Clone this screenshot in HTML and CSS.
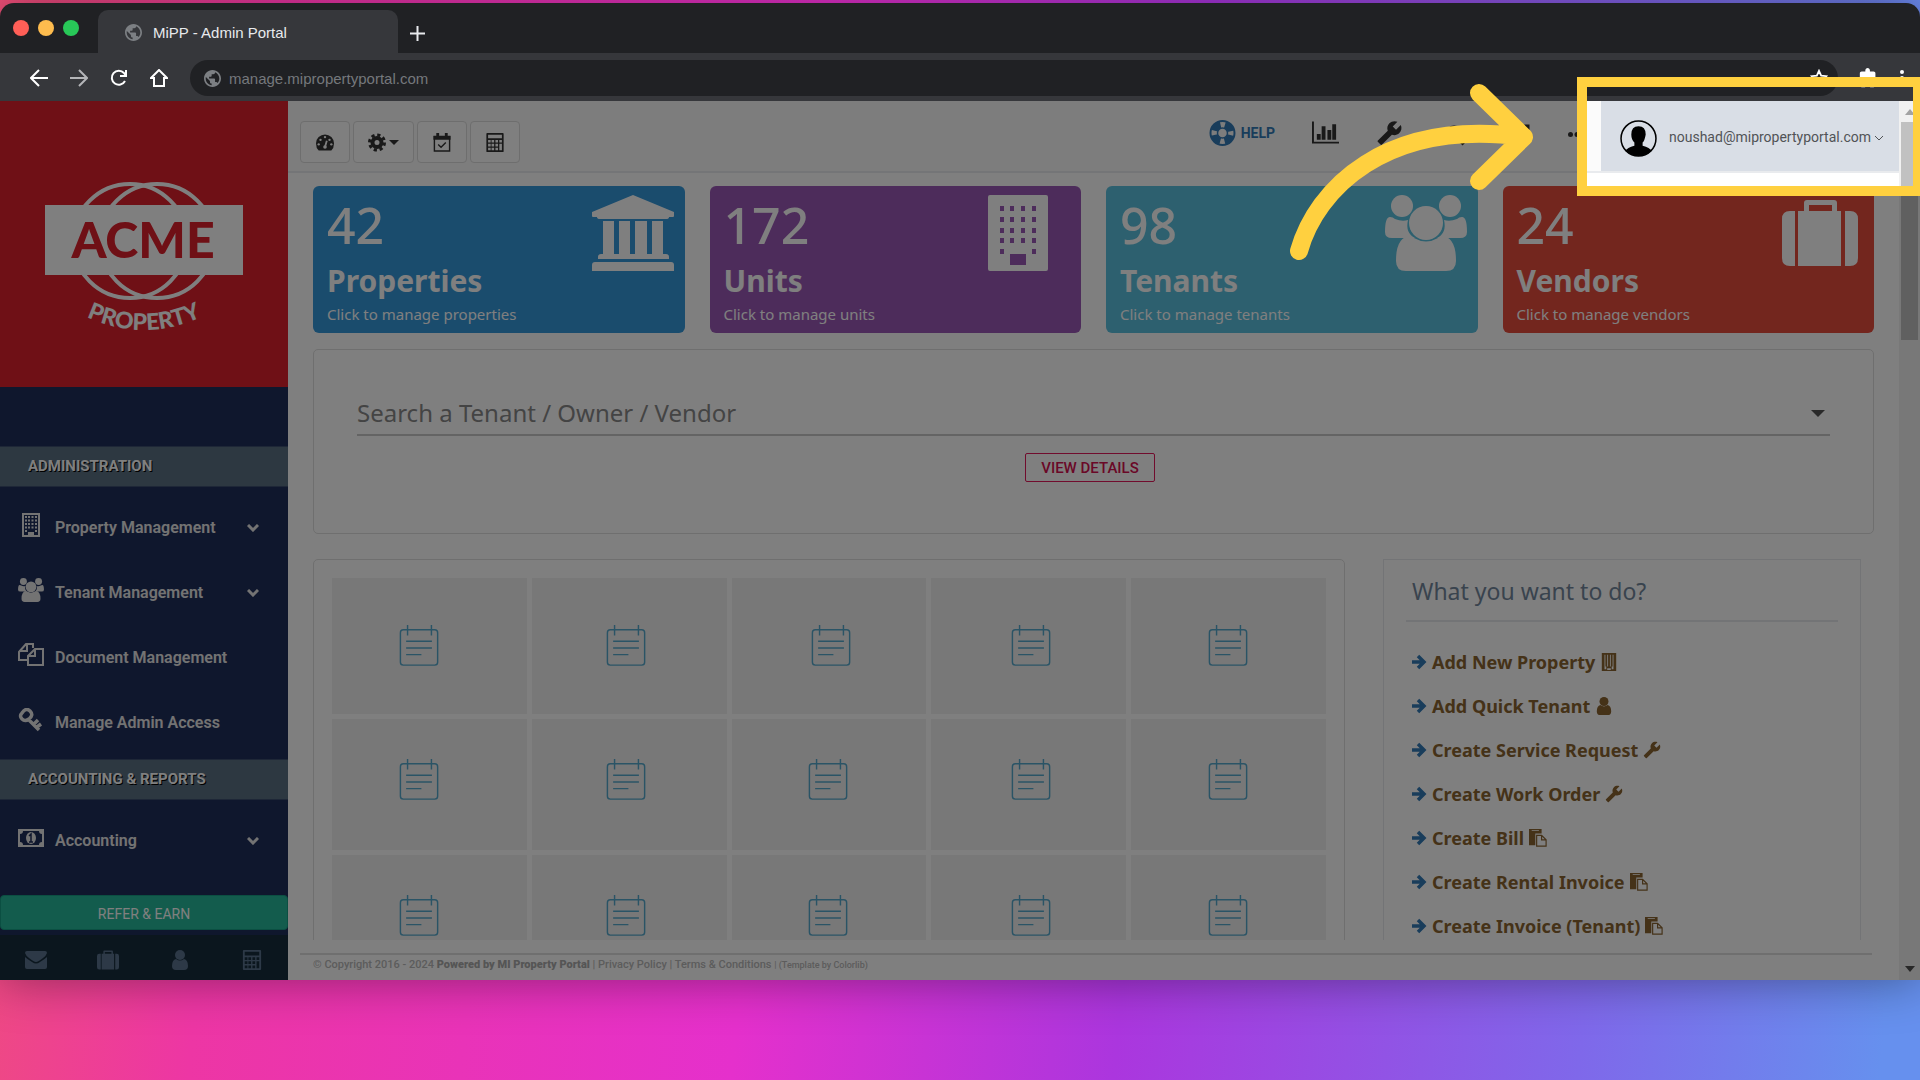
FILE: index.html
```html
<!DOCTYPE html>
<html lang="en">
<head>
<meta charset="utf-8">
<meta name="viewport" content="width=device-width, initial-scale=1">
<title>MiPP - Admin Portal</title>
<link rel="stylesheet" href="styles.css">
</head>
<body>
<svg class="sprite" aria-hidden="true">
  <symbol id="globe" viewBox="2 2 20 20"><path d="M12 2C6.480 2 2 6.480 2 12s4.480 10 10 10 10-4.480 10-10S17.520 2 12 2zm-1 17.930c-3.950-.49-7-3.850-7-7.930 0-.62.08-1.210.21-1.790L9 15v1c0 1.100.9 2 2 2v1.930zm6.900-2.540c-.26-.81-1-1.390-1.900-1.390h-1v-3c0-.55-.45-1-1-1H8v-2h2c.55 0 1-.45 1-1V7h2c1.100 0 2-.9 2-2v-.41c2.930 1.190 5 4.060 5 7.410 0 2.080-.8 3.970-2.100 5.390z"/></symbol>
  <symbol id="building" viewBox="0 0 20 24"><path fill-rule="evenodd" d="M1 0h18v24H1zM3 2v20h4v-3h6v3h4V2z"/><path d="M4 3h2v2H4zM7 3h2v2H7zM10.500 3h2v2h-2zM14 3h2v2h-2zM4 6.500h2v2H4zM7 6.500h2v2H7zM10.500 6.500h2v2h-2zM14 6.500h2v2h-2zM4 10h2v2H4zM7 10h2v2H7zM10.500 10h2v2h-2zM14 10h2v2h-2zM4 13.500h2v2H4zM7 13.500h2v2H7zM10.500 13.500h2v2h-2zM14 13.500h2v2h-2zM4 17h2v2H4zM14 17h2v2h-2z"/></symbol>
  <symbol id="block" viewBox="0 0 16 20"><path fill-rule="evenodd" d="M0 0h16v20H0zM3 2v13h1V2zm3 0v13h1V2zm3 0v13h1V2zm3 0v13h1V2zM3 15v3h2v-3zm8 0v3h2v-3zM6 17v2h4v-2z"/></symbol>
  <symbol id="tower" viewBox="0 0 60 76"><path fill-rule="evenodd" d="M2 0h56q2 0 2 2v72q0 2-2 2H2q-2 0-2-2V2q0-2 2-2zM12 11v5h4v-5zm10 0v5h4v-5zm11 0v5h4v-5zm11 0v5h4v-5zM12 22v5h4v-5zm10 0v5h4v-5zm11 0v5h4v-5zm11 0v5h4v-5zM12 33v5h4v-5zm10 0v5h4v-5zm11 0v5h4v-5zm11 0v5h4v-5zM12 43v5h4v-5zm10 0v5h4v-5zm11 0v5h4v-5zm11 0v5h4v-5zM12 54v5h4v-5zm32 0v5h4v-5zM22 59v11h16V59z"/></symbol>
  <symbol id="bank" viewBox="0 0 82 76"><path d="M41 0l41 17v4q0 1-1 1h-4q0 2-3 2H8q-3 0-3-2H1q-1 0-1-1v-4zM11 26h11v33h5V26h11v33h5V26h12v33h5V26h11v33h3q3 0 3 3v2H6v-2q0-3 3-3h2zM3 67h76q3 0 3 3v6H0v-6q0-3 3-3z"/></symbol>
  <symbol id="users" viewBox="0 0 82 76"><ellipse cx="17" cy="11" rx="11" ry="11"/><ellipse cx="65" cy="11" rx="11" ry="11"/><path d="M5 22q3 0 5 2 7 3 13 1-3 13 7 18H7q-7 0-7-6 0-15 5-15zM77 22q-3 0-5 2-7 3-13 1 3 13-7 18h23q7 0 7-6 0-15-5-15z"/><circle cx="41" cy="28" r="17"/><path d="M25 41q2 0 4 2 12 7 24 0 2-2 4-2 14 1 14 25 0 10-10 10H21q-10 0-10-10 0-24 14-25z"/></symbol>
  <symbol id="suitcase" viewBox="0 0 76 66"><path fill-rule="evenodd" d="M22 11V3q0-3 3-3h27q3 0 3 3v8h4v55H16V11zm5 0h23V5H27zM8 11h5v55H8q-8 0-8-8V19q0-8 8-8zM63 11h5q8 0 8 8v39q0 8-8 8h-5z"/></symbol>
  <symbol id="wrench" viewBox="0 0 24 24"><path transform="matrix(-1 0 0 1 24 0)" d="M22.700 19l-9.100-9.100c.9-2.300.4-5-1.500-6.900-2-2-5-2.400-7.400-1.300L9 6 6 9 1.600 4.700C.4 7.100.9 10.100 2.900 12.100c1.900 1.900 4.600 2.400 6.900 1.500l9.100 9.100c.4.4 1 .4 1.400 0l2.300-2.300c.5-.4.5-1.100.1-1.400z"/></symbol>
  <symbol id="copy" viewBox="0 0 26 24"><path d="M9 17H1V9l7-8h7v4M9 1v7H1M17 6h8v16H10V13zM17 6v7h-7" fill="none" stroke="currentColor" stroke-width="2"/></symbol>
  <symbol id="paste" viewBox="0 0 20 20"><path fill-rule="evenodd" d="M0 0h14v5H7v13H0zM3 1v1h8V1z"/><path d="M8.500 7H14l5 5v7H8.500zM14 7v5h5" fill="none" stroke="currentColor" stroke-width="1.300"/></symbol>
  <symbol id="key" viewBox="0 0 24 24"><path d="M3 5q4-6 8-2 4 4-1 8-4 3-7 0-3-3 0-6zM9 11l11 11M15 16l4-4M18 19l4-3" fill="none" stroke="currentColor" stroke-width="3.500"/></symbol>
  <symbol id="money" viewBox="0 0 26 18"><path fill-rule="evenodd" d="M0 0h26v18H0zM5 2q0 3-3 3v8q3 0 3 3h16q0-3 3-3V5q-3 0-3-3z"/><ellipse cx="13" cy="9" rx="5" ry="6"/><path d="M11 7l2-2v8m-2 0h4" fill="none" stroke="#1f2e5b" stroke-width="1.500"/></symbol>
  <symbol id="chevron" viewBox="0 0 12 8"><path d="M1 1l5 5 5-5" fill="none" stroke="currentColor" stroke-width="3"/></symbol>
  <symbol id="person" viewBox="0 0 16 20"><circle cx="8" cy="5" r="5"/><path d="M4 9q4 3 8 0 4 1 4 7 0 4-4 4H4q-4 0-4-4 0-6 4-7z"/></symbol>
  <symbol id="mail" viewBox="0 0 22 18"><path d="M2 0h18q2 0 2 2-1 3-4 5-5 4-7 4T4 7Q1 5 0 2q0-2 2-2zM0 6q2 2 7 5 4 3 8 0 5-3 7-5v10q0 2-2 2H2q-2 0-2-2z"/></symbol>
  <symbol id="calc" viewBox="0 0 20 22"><path fill-rule="evenodd" d="M1 0h18q1 0 1 1v20q0 1-1 1H1q-1 0-1-1V1q0-1 1-1zM2 2v4h16V2zM2 8v3h3V8zm4 0v3h3V8zm4.500 0v3h3V8zM15 8v3h3V8zM2 12.500v3h3v-3zm4 0v3h3v-3zm4.500 0v3h3v-3zm4.500 0V20h3v-7.500zM2 17v3h3v-3zm4 0v3h3v-3zm4.500 0v3h3v-3z"/></symbol>
  <symbol id="arrow" viewBox="0 0 15 16"><path d="M0 8h12M6 2l6 6-6 6" fill="none" stroke="currentColor" stroke-width="3.500"/></symbol>
  <symbol id="note" viewBox="0 0 42 44"><rect x="1" y="5" width="39" height="37" rx="3" fill="none" stroke="currentColor" stroke-width="1.500"/><path d="M8.500 0v11M33.500 0v11M7 17h27M7 24h27M7 31h16" fill="none" stroke="currentColor" stroke-width="1.500"/></symbol>
</svg>

<div class="window">
  <header class="tabbar">
    <span class="light light-red"></span><span class="light light-amber"></span><span class="light light-green"></span>
    <div class="tab"><svg class="globe"><use href="#globe"/></svg><span>MiPP - Admin Portal</span></div>
    <button class="newtab" aria-label="New tab"><svg viewBox="0 0 15 15"><path d="M7.500 0v15M0 7.500h15" stroke="currentColor" stroke-width="2"/></svg></button>
  </header>
  <div class="toolbar">
    <button class="tool" aria-label="Back"><svg viewBox="0 0 18 18"><path d="M18 9H2M9 1L1 9l8 8"/></svg></button>
    <button class="tool tool-faded" aria-label="Forward"><svg viewBox="0 0 18 18"><path d="M0 9h16M9 1l8 8-8 8"/></svg></button>
    <button class="tool" aria-label="Reload"><svg viewBox="0 0 18 18"><path d="M15 12a7 7 0 1 1-1-8l2 3M16 1v6h-6"/></svg></button>
    <button class="tool" aria-label="Home"><svg viewBox="0 0 18 18"><path d="M1 9l8-8 8 8h-3v8H4V9z"/></svg></button>
    <label class="address"><svg class="globe"><use href="#globe"/></svg><input type="text" aria-label="Address" value="manage.mipropertyportal.com"><svg class="star" viewBox="0 0 20 20"><path d="M10 2l2.400 5.400 5.600.6-4.200 4 1.200 5.600L10 14.700l-5 2.900L6.200 12 2 8l5.600-.6z" fill="none" stroke="currentColor" stroke-width="2"/></svg></label>
    <svg class="puzzle" viewBox="0 0 24 24"><path d="M20.500 11H19V7c0-1.100-.9-2-2-2h-4V3.500C13 2.120 11.880 1 10.500 1S8 2.120 8 3.500V5H4c-1.100 0-2 .9-2 2v3.800h1.500c1.490 0 2.700 1.210 2.700 2.700s-1.210 2.700-2.700 2.700H2V20c0 1.100.9 2 2 2h3.800v-1.500c0-1.490 1.210-2.700 2.700-2.700s2.700 1.210 2.700 2.700V22H17c1.100 0 2-.9 2-2v-4h1.500c1.380 0 2.500-1.120 2.500-2.500S21.880 11 20.500 11z"/></svg>
    <svg class="kebab" viewBox="0 0 4 20"><circle cx="2" cy="4" r="2"/><circle cx="2" cy="10" r="2"/><circle cx="2" cy="16" r="2"/></svg>
  </div>

  <div class="viewport">
    <aside class="sidebar">
      <div class="brand">
        <svg viewBox="0 0 198 150" role="img" aria-label="ACME Property">
          <g fill="none" stroke="#fff" stroke-width="4"><circle cx="85" cy="60" r="57"/><circle cx="112" cy="60" r="57"/></g>
          <rect y="24" width="198" height="70" fill="#fff"/>
          <text class="brand-name" x="98" y="77" text-anchor="middle">ACME</text>
          <path id="arc" d="M26 128Q99 170 172 128" fill="none"/>
          <text class="brand-sub" text-anchor="middle"><textPath href="#arc" startOffset="50%">PROPERTY</textPath></text>
        </svg>
      </div>
      <h2 class="section">ADMINISTRATION</h2>
      <nav class="menu">
        <a href="#"><svg><use href="#building"/></svg><span>Property Management</span><svg class="chev"><use href="#chevron"/></svg></a>
        <a href="#"><svg><use href="#users"/></svg><span>Tenant Management</span><svg class="chev"><use href="#chevron"/></svg></a>
        <a href="#"><svg><use href="#copy"/></svg><span>Document Management</span></a>
        <a href="#"><svg><use href="#key"/></svg><span>Manage Admin Access</span></a>
      </nav>
      <h2 class="section">ACCOUNTING &amp; REPORTS</h2>
      <nav class="menu">
        <a href="#"><svg><use href="#money"/></svg><span>Accounting</span><svg class="chev"><use href="#chevron"/></svg></a>
      </nav>
      <button class="refer">REFER &amp; EARN</button>
      <div class="quick">
        <a href="#" aria-label="Messages"><svg><use href="#mail"/></svg></a>
        <a href="#" aria-label="Vendors"><svg><use href="#suitcase"/></svg></a>
        <a href="#" aria-label="Profile"><svg><use href="#person"/></svg></a>
        <a href="#" aria-label="Calculator"><svg><use href="#calc"/></svg></a>
      </div>
    </aside>

    <main class="main">
      <div class="topnav">
        <div class="shortcuts">
          <button aria-label="Dashboard"><svg viewBox="0 0 20 18"><path d="M3 18Q0 15 0 10a10 10 0 0 1 20 0q0 5-3 8z"/><path d="M10 14l2-7" stroke="#fff" stroke-width="2"/><g fill="#fff"><circle cx="3" cy="11" r="1.300"/><circle cx="5" cy="6" r="1.300"/><circle cx="10" cy="3" r="1.300"/><circle cx="15" cy="6" r="1.300"/><circle cx="17" cy="11" r="1.300"/><circle cx="10" cy="14" r="2"/></g></svg></button>
          <button class="wide" aria-label="Settings"><svg viewBox="0 0 18 18"><circle cx="9" cy="9" r="4.500" fill="none" stroke="currentColor" stroke-width="4"/><circle cx="9" cy="9" r="7.500" fill="none" stroke="currentColor" stroke-width="3" stroke-dasharray="3.200 2.690"/></svg><svg class="caret" viewBox="0 0 10 5"><path d="M0 0h10L5 5z"/></svg></button>
          <button aria-label="Calendar"><svg viewBox="0 0 18 20"><path d="M1 4h16v15H1z" fill="none" stroke="currentColor" stroke-width="1.500"/><path d="M0 3h18v4H0zM3 0h3v5H3zM12 0h3v5h-3z"/><path d="M5 12l3 3 5-5" fill="none" stroke="currentColor" stroke-width="1.500"/></svg></button>
          <button aria-label="Calculator"><svg><use href="#calc"/></svg></button>
        </div>
        <div class="tools">
          <a class="help" href="#"><svg viewBox="0 0 26 26"><g fill="none" stroke="currentColor"><circle cx="13" cy="13" r="8.500" stroke-width="7" stroke-dasharray="8.900 4.450" stroke-dashoffset="-2.220"/><circle cx="13" cy="13" r="12" stroke-width="2"/><circle cx="13" cy="13" r="5" stroke-width="1.500"/></g></svg>HELP</a>
          <a href="#" aria-label="Reports"><svg viewBox="0 0 28 24"><path d="M1 0v22h27" fill="none" stroke="currentColor" stroke-width="2"/><path d="M5 13h4v6H5zM10 5h4v14h-4zM16 9h4v10h-4zM21 3h4v16h-4z"/></svg></a>
          <a href="#" aria-label="Maintenance"><svg><use href="#wrench"/></svg></a>
          <a href="#" aria-label="Search"><svg viewBox="0 0 27 26"><circle cx="14" cy="14" r="7" fill="none" stroke="currentColor" stroke-width="3"/><path d="M19 19l5 5" stroke="currentColor" stroke-width="4"/></svg></a>
          <a href="#" aria-label="Calendar"><svg viewBox="0 0 27 26"><path d="M4 6h20v15H4z" fill="none" stroke="currentColor" stroke-width="3"/></svg></a>
          <a href="#" aria-label="More"><svg viewBox="0 0 27 26"><circle cx="2.500" cy="14.500" r="2.500"/><circle cx="9" cy="14.500" r="2.500"/><circle cx="15.500" cy="14.500" r="2.500"/></svg></a>
        </div>
        <button class="account">
          <svg class="avatar" viewBox="0 0 36 36"><circle cx="18" cy="18" r="17" fill="#d9dee6" stroke="#000" stroke-width="1.500"/><path d="M18 6q7 0 7 8-1 6-3 8v3q7 2 9 5-6 5-13 5T5 30q2-3 9-5v-3q-3-3-3-8 0-8 7-8z"/></svg>
          <span>noushad@mipropertyportal.com</span>
          <svg class="down" viewBox="0 0 8 6"><path d="M0 1l4 4 4-4" fill="none" stroke="currentColor"/></svg>
        </button>
      </div>

      <div class="content">
        <div class="cards">
          <a class="card blue" href="#"><div><strong>42</strong><h3>Properties</h3><p>Click to manage properties</p></div><svg class="i-bank"><use href="#bank"/></svg></a>
          <a class="card purple" href="#"><div><strong>172</strong><h3>Units</h3><p>Click to manage units</p></div><svg class="i-tower"><use href="#tower"/></svg></a>
          <a class="card teal" href="#"><div><strong>98</strong><h3>Tenants</h3><p>Click to manage tenants</p></div><svg class="i-users"><use href="#users"/></svg></a>
          <a class="card red" href="#"><div><strong>24</strong><h3>Vendors</h3><p>Click to manage vendors</p></div><svg class="i-case"><use href="#suitcase"/></svg></a>
        </div>

        <section class="panel search">
          <div class="selectbox"><select aria-label="Search a Tenant / Owner / Vendor"><option>Search a Tenant / Owner / Vendor</option></select><svg viewBox="0 0 14 7"><path d="M0 0h14L7 7z"/></svg></div>
          <button>VIEW DETAILS</button>
        </section>

        <div class="lower">
          <section class="panel calendar">
            <div class="cell c1"><svg><use href="#note"/></svg></div><div class="cell c2"><svg><use href="#note"/></svg></div><div class="cell c3"><svg><use href="#note"/></svg></div><div class="cell c3"><svg><use href="#note"/></svg></div><div class="cell"><svg><use href="#note"/></svg></div>
            <div class="cell later c1"><svg><use href="#note"/></svg></div><div class="cell later c2"><svg><use href="#note"/></svg></div><div class="cell later"><svg><use href="#note"/></svg></div><div class="cell later c3"><svg><use href="#note"/></svg></div><div class="cell later"><svg><use href="#note"/></svg></div>
            <div class="cell later c1"><svg><use href="#note"/></svg></div><div class="cell later c2"><svg><use href="#note"/></svg></div><div class="cell later"><svg><use href="#note"/></svg></div><div class="cell later c3"><svg><use href="#note"/></svg></div><div class="cell later"><svg><use href="#note"/></svg></div>
          </section>
          <section class="tasks">
            <h2>What you want to do?</h2>
            <ul>
              <li><svg class="go"><use href="#arrow"/></svg><a href="#">Add New Property</a><svg class="kind"><use href="#block"/></svg></li>
              <li><svg class="go"><use href="#arrow"/></svg><a href="#">Add Quick Tenant</a><svg class="kind"><use href="#person"/></svg></li>
              <li><svg class="go"><use href="#arrow"/></svg><a href="#">Create Service Request</a><svg class="kind"><use href="#wrench"/></svg></li>
              <li><svg class="go"><use href="#arrow"/></svg><a href="#">Create Work Order</a><svg class="kind"><use href="#wrench"/></svg></li>
              <li><svg class="go"><use href="#arrow"/></svg><a href="#">Create Bill</a><svg class="kind"><use href="#paste"/></svg></li>
              <li><svg class="go"><use href="#arrow"/></svg><a href="#">Create Rental Invoice</a><svg class="kind"><use href="#paste"/></svg></li>
              <li><svg class="go"><use href="#arrow"/></svg><a href="#">Create Invoice (Tenant)</a><svg class="kind"><use href="#paste"/></svg></li>
            </ul>
          </section>
        </div>
      </div>

      <footer class="footer">© Copyright 2016 - 2024 <b>Powered by MI Property Portal</b> | <a href="#">Privacy Policy</a> | <a href="#">Terms &amp; Conditions</a> <small>| (Template by Colorlib)</small></footer>
    </main>

    <div class="scrollbar">
      <svg class="up" viewBox="0 0 10 6"><path d="M0 6h10L5 0z"/></svg>
      <div class="thumb"></div>
      <svg class="dn" viewBox="0 0 10 6"><path d="M0 0h10L5 6z"/></svg>
    </div>
    <div class="spotlight"></div>
  </div>

  <div class="highlight"></div>
  <svg class="pointer" viewBox="1280 70 262 200"><path d="M1299 251C1316 190 1385 118 1524 137M1479 93L1524 137L1479 181" fill="none" stroke="#ffd03f" stroke-width="18" stroke-linecap="round" stroke-linejoin="round"/></svg>
</div>
</body>
</html>
```
FILE: styles.css
```css
* { box-sizing: border-box; }
body {
  margin: 0;
  height: 100vh;
  min-height: 900px;
  display: flex;
  flex-direction: column;
  overflow: hidden;
  padding: 3px 0 100px;
  font-family: Roboto, "Liberation Sans", sans-serif;
  background: linear-gradient(95deg, #ef5078 0%, #ed36a4 14%, #e530cc 41%, #ab36de 60%, #7f68ea 83%, #6690ee 98%);
}
h2, h3, p, ul { margin: 0; padding: 0; }
ul { list-style: none; }
a { color: inherit; text-decoration: none; }
button { font: inherit; color: inherit; border: 0; background: none; padding: 0; }
svg { fill: currentColor; flex: none; }
.sprite { position: absolute; width: 0; height: 0; }

.window {
  position: relative;
  flex: 1;
  min-height: 0;
  display: flex;
  flex-direction: column;
  border-radius: 14px 14px 0 0;
  background: #202124;
  box-shadow: 0 0 50px rgba(0, 0, 0, .4);
}

/* browser chrome */
.tabbar { height: 50px; display: flex; align-items: center; padding-left: 13px; color: #e8eaed; }
.light { width: 16px; height: 16px; border-radius: 50%; margin-right: 9px; }
.light-red { background: #ff5f57; }
.light-amber { background: #febc4e; }
.light-green { background: #28c858; }
.tab {
  align-self: flex-end;
  width: 300px;
  height: 43px;
  margin-left: 10px;
  padding: 2px 0 0 27px;
  display: flex;
  align-items: center;
  gap: 11px;
  border-radius: 10px 10px 0 0;
  background: #36373b;
  font: 15px "Liberation Sans", sans-serif;
}
.globe { width: 17px; height: 17px; color: #7c7f83; }
.newtab { margin: 10px 0 0 12px; height: 15px; }
.newtab svg { width: 15px; height: 15px; display: block; }
.toolbar { height: 48px; background: #36373b; display: flex; align-items: center; padding: 2px 0 0 30px; color: #fff; }
.tool { width: 18px; height: 18px; margin-right: 22px; }
.tool svg { display: block; width: 18px; height: 18px; fill: none; stroke: currentColor; stroke-width: 2; }
.tool-faded { color: #b4b5b8; }
.address { flex: 1; height: 36px; display: flex; align-items: center; gap: 8px; padding: 0 10px 0 14px; border-radius: 18px; background: #202124; }
.address input { flex: 1; border: 0; padding: 0; background: none; outline: 0; color: #75787c; font: 15px "Liberation Sans", sans-serif; }
.star { width: 18px; height: 18px; }
.puzzle { width: 22px; height: 22px; margin-left: 20px; }
.kebab { width: 4px; height: 20px; margin: 0 16px 0 20px; }

/* portal page */
.viewport { position: relative; flex: 1; min-height: 0; display: flex; overflow: hidden; background: #fff; }
.spotlight { position: absolute; top: 0; right: 7px; width: 326px; height: 85px; box-shadow: 0 0 0 3000px rgba(0, 0, 0, .5); pointer-events: none; }
.highlight { position: absolute; top: 74px; right: -3px; width: 346px; height: 119px; border: 10px solid #ffd03f; pointer-events: none; }
.pointer { position: absolute; top: 67px; right: 378px; width: 262px; height: 200px; pointer-events: none; }

.sidebar { width: 288px; flex: none; display: flex; flex-direction: column; background: #1f2e5b; color: #e7e7e7; }
.brand { height: 286px; display: grid; place-items: center; background: #de212d; padding-top: 24px; margin-bottom: 59px; }
.brand svg { width: 198px; height: 150px; overflow: visible; }
.brand-name { font: 900 50px Lato, sans-serif; fill: #de212d; }
.brand-sub { font: 900 23px Lato, sans-serif; fill: #fff; }
.section {
  height: 41px;
  padding-left: 28px;
  font-size: 15px;
  font-weight: 700;
  line-height: 39px;
  border: 1px solid #3c4f6e;
  border-width: 1px 0;
  background: #5a7083;
  color: #fff;
  text-shadow: 1px 1px #000;
}
.menu { padding: 8px 0 4px; }
.menu a { height: 65px; padding: 0 29px 0 18px; display: flex; align-items: center; font-size: 16px; font-weight: 600; }
.menu span { flex: 1; margin-left: 11px; }
.menu svg { width: 26px; height: 24px; margin-bottom: 6px; }
.menu .chev { width: 12px; height: 8px; margin: 0; }
.refer { margin-top: auto; height: 35px; padding-top: 3px; border-radius: 4px; background: #26b99a; border: 1px solid #169f85; color: #fff; font-size: 14px; }
.quick { height: 45px; margin-top: 5px; padding-top: 4px; display: grid; grid-template-columns: repeat(4, 1fr); place-items: center; background: #172d3d; color: #5a738e; }
.quick svg { width: 22px; height: 20px; display: block; }

.main { flex: 1; min-width: 0; display: flex; flex-direction: column; font-family: "Noto Sans", sans-serif; }
.topnav { height: 72px; flex: none; display: flex; background: #fbfbfb; border-bottom: 2px solid #e9ebee; font-family: Roboto, sans-serif; color: #333; }
.shortcuts { display: flex; gap: 3px; padding: 20px 0 0 12px; }
.shortcuts button { width: 50px; height: 42px; display: flex; align-items: center; justify-content: center; gap: 3px; border: 1px solid #dcdcdc; border-radius: 4px; background: #fff; }
.shortcuts .wide { width: 61px; }
.shortcuts svg { width: 18px; height: 19px; }
.shortcuts .caret { width: 10px; height: 5px; }
.tools { margin-left: auto; display: flex; gap: 37px; padding: 19px 6px 0 0; }
.tools svg { width: 27px; height: 26px; display: block; }
.tools .help { display: flex; align-items: center; height: 26px; gap: 5px; color: #337ab7; font-weight: 700; font-size: 14px; }
.account { width: 298px; display: flex; align-items: center; gap: 12px; padding: 4px 0 0 19px; background: #d9dee6; color: #515356; font-size: 14px; }
.account span { padding-bottom: 3px; }
.account .avatar { width: 37px; height: 37px; color: #000; }
.account .down { width: 8px; height: 6px; margin-left: -8px; }

.content { flex: 1; min-height: 0; overflow: hidden; padding: 13px 25px 0; }
.cards { display: grid; grid-template-columns: repeat(4, 1fr); gap: 25px; }
.card { height: 147px; display: flex; justify-content: space-between; padding: 9px 11px 0 14px; border-radius: 6px; color: #fff; }
.card strong { display: block; font-size: 50px; line-height: 60px; font-weight: 500; }
.card h3 { font-size: 30px; line-height: 52px; font-weight: 700; }
.card p { font-size: 15px; line-height: 15px; }
.blue { background: #3498db; }
.purple { background: #9b59b6; }
.teal { background: #5bc0de; }
.red { background: #e74c3c; }
.i-bank, .i-users { width: 82px; height: 76px; }
.i-tower { width: 60px; height: 76px; margin-right: 22px; }
.i-case { width: 76px; height: 66px; margin: 5px 5px 0 0; }

.panel { border: 1px solid #dedede; border-radius: 5px; }
.search { height: 185px; margin-top: 16px; padding: 43px 43px 0; text-align: center; }
.selectbox { display: flex; align-items: center; height: 43px; padding-right: 5px; border-bottom: 2px solid #c8c8c8; color: #555; }
.selectbox select { flex: 1; appearance: none; border: 0; background: none; padding: 0 0 2px; font: 24px "Noto Sans", sans-serif; color: #888; }
.selectbox svg { width: 14px; height: 7px; }
.search button { width: 130px; height: 29px; margin: 17px 7px 0 0; border: 1px solid #e2185b; border-radius: 2px; color: #d5104f; font: 500 15px Roboto, sans-serif; }

.lower { display: grid; grid-template-columns: 1032fr 478fr; gap: 38px; margin: 25px 13px 0 0; }
.calendar { display: grid; grid-template-columns: repeat(5, 1fr); grid-template-rows: 136px 131px 131px; gap: 5px; padding: 18px; }
.cell { display: grid; place-items: center; background: #f0f0f0; color: #55a8cc; }
.c1 { padding-right: 20px; }
.c2 { padding-right: 6px; }
.c3 { padding-left: 6px; }
.later { padding-bottom: 10px; }
.cell svg { width: 41px; height: 42px; }
.tasks { border: 1px solid #e6e9ed; padding: 10px 22px; }
.tasks h2 { font-size: 23px; line-height: 42px; font-weight: 400; color: #73879c; border-bottom: 2px solid #e6e9ed; padding: 0 6px 8px; }
.tasks ul { padding: 18px 6px; }
.tasks li { height: 44px; display: flex; align-items: center; gap: 5px; font-size: 18px; font-weight: 700; color: #8a6430; }
.tasks .go { width: 15px; height: 16px; color: #337ab7; }
.tasks .kind { width: 18px; height: 18px; }

.footer { margin: 13px 27px 0 12px; height: 27px; padding: 1px 0 0 13px; border-top: 2px solid #dedede; font: 500 11px/18px Roboto, sans-serif; color: #b8b8b8; }
.footer b { font-weight: 900; color: #aaa; }
.footer small { font-size: 9px; }

.scrollbar { width: 21px; display: flex; flex-direction: column; align-items: center; background: #f1f1f1; padding: 8px 2px; }
.scrollbar svg { width: 10px; height: 6px; }
.up { color: #a3a3a3; margin-bottom: 7px; }
.thumb { width: 100%; height: 218px; background: #c1c1c1; }
.dn { margin-top: auto; color: #505050; }
```
